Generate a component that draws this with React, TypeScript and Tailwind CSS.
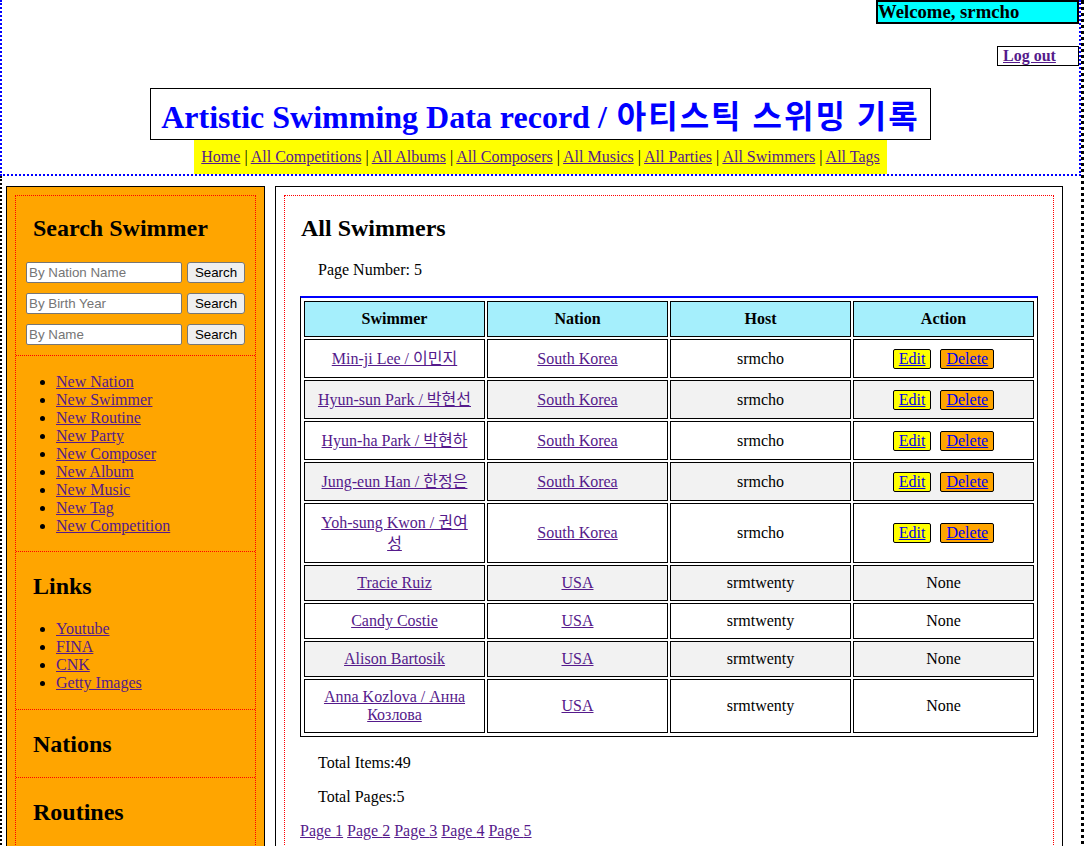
import React from 'react';

type Row = { name: React.ReactNode; key: string; ko?: boolean; nation: string; host: string; edit: boolean };

const rows: Row[] = [
  { key: 'a', name: 'Min-ji Lee / 이민지', ko: true, nation: 'South Korea', host: 'srmcho', edit: true },
  { key: 'b', name: 'Hyun-sun Park / 박현선', ko: true, nation: 'South Korea', host: 'srmcho', edit: true },
  { key: 'c', name: 'Hyun-ha Park / 박현하', ko: true, nation: 'South Korea', host: 'srmcho', edit: true },
  { key: 'd', name: 'Jung-eun Han / 한정은', ko: true, nation: 'South Korea', host: 'srmcho', edit: true },
  {
    key: 'e',
    name: (
      <>
        Yoh-sung Kwon / 권여
        <br />성
      </>
    ),
    ko: true,
    nation: 'South Korea',
    host: 'srmcho',
    edit: true,
  },
  { key: 'f', name: 'Tracie Ruiz', nation: 'USA', host: 'srmtwenty', edit: false },
  { key: 'g', name: 'Candy Costie', nation: 'USA', host: 'srmtwenty', edit: false },
  { key: 'h', name: 'Alison Bartosik', nation: 'USA', host: 'srmtwenty', edit: false },
  { key: 'i', name: 'Anna Kozlova / Анна Козлова', nation: 'USA', host: 'srmtwenty', edit: false },
];

const navItems = ['Home', 'All Competitions', 'All Albums', 'All Composers', 'All Musics', 'All Parties', 'All Swimmers', 'All Tags'];
const newItems = ['New Nation', 'New Swimmer', 'New Routine', 'New Party', 'New Composer', 'New Album', 'New Music', 'New Tag', 'New Competition'];
const linkItems = ['Youtube', 'FINA', 'CNK', 'Getty Images'];

function L({ children }: { children: React.ReactNode }) {
  return <a href="#" className="text-[#551a8b] underline">{children}</a>;
}

export default function App() {
  return (
    <div className="w-full min-h-[846px] bg-white border-r-[3px] border-dotted border-black font-['Liberation_Serif','Noto_Sans_CJK_KR',serif] text-[16px] leading-[18px] text-black">
      <header className="h-[176px] border-x-2 border-b-2 border-dotted border-[#0000ff] flex flex-col items-center">
        <div className="self-end w-[203px] h-[24px] bg-[#00ffff] border-2 border-black text-[18.72px] font-bold leading-[20px]">
          Welcome, srmcho
        </div>
        <div className="self-end mt-[22px] w-[82px] h-[20px] border border-black pl-[5px] leading-[18px]">
          <a href="#" className="font-bold underline text-[#551a8b]">Log out</a>
        </div>
        <div className="mt-[22px] h-[52px] border border-black px-[10px] pt-[6px] flex items-center text-[32px] font-bold text-[#0000ff] leading-[40px] whitespace-nowrap">
          <span>Artistic Swimming Data record /</span>
          <span className="tracking-[2px] ml-[10px]">아티스틱 스위밍 기록</span>
        </div>
        <div className="h-[34px] bg-[#ffff00] px-[7px] py-[8px] leading-[18px] whitespace-nowrap">
          {navItems.map((n, i) => (
            <React.Fragment key={n}>
              {i > 0 && ' | '}
              <L>{n}</L>
            </React.Fragment>
          ))}
        </div>
      </header>

      <div className="border-l-2 border-dotted border-black flex items-start gap-[10px] pl-[4px] pt-[10px]">
        <aside className="w-[259px] shrink-0 bg-[#ffa500] border border-black p-[8px] pb-[40px]">
          <div className="border-x border-t border-dotted border-[#ff0000]">
            <section className="border-b border-dotted border-[#ff0000] px-[10px] pb-[10px]">
              <h2 className="mt-[18px] mb-[20px] pl-[7px] text-[24px] font-bold leading-[28px]">Search Swimmer</h2>
              {['By Nation Name', 'By Birth Year', 'By Name'].map((p, i) => (
                <div key={p} className={i > 0 ? 'flex gap-[5px] mt-[10px]' : 'flex gap-[5px]'}>
                  <input
                    placeholder={p}
                    className="w-[156px] h-[21px] bg-white border border-[#767676] rounded-[2px] px-[2px] font-['Liberation_Sans',Arial,sans-serif] text-[13.33px] placeholder:text-[#757575] outline-none"
                  />
                  <button className="w-[58px] h-[21px] bg-[#efefef] border border-[#767676] rounded-[3px] font-['Liberation_Sans',Arial,sans-serif] text-[13.33px] text-black leading-[15px]">
                    Search
                  </button>
                </div>
              ))}
            </section>
            <section className="border-b border-dotted border-[#ff0000]">
              <ul className="list-disc pl-[40px] mt-[17px] mb-[16px]">
                {newItems.map((n) => (
                  <li key={n} className="leading-[18px]"><L>{n}</L></li>
                ))}
              </ul>
            </section>
            <section className="border-b border-dotted border-[#ff0000]">
              <h2 className="mt-[20px] mb-[20px] pl-[17px] text-[24px] font-bold leading-[28px]">Links</h2>
              <ul className="list-disc pl-[40px] mb-[17px]">
                {linkItems.map((n) => (
                  <li key={n} className="leading-[18px]"><L>{n}</L></li>
                ))}
              </ul>
            </section>
            <section className="border-b border-dotted border-[#ff0000]">
              <h2 className="mt-[20px] mb-[19px] pl-[17px] text-[24px] font-bold leading-[28px]">Nations</h2>
            </section>
            <section className="border-b border-dotted border-[#ff0000]">
              <h2 className="mt-[20px] mb-[20px] pl-[17px] text-[24px] font-bold leading-[28px]">Routines</h2>
            </section>
          </div>
        </aside>

        <main className="w-[788px] shrink-0 border border-black p-[8px]">
          <div className="border border-dotted border-[#ff0000] px-[15px] pb-[20px]">
            <h2 className="mt-[18px] pl-[1px] text-[24px] font-bold leading-[28px]">All Swimmers</h2>
            <p className="mt-[19px] pl-[18px] leading-[18px]">Page Number: 5</p>
            <table className="mt-[17px] w-[738px] table-fixed border-separate border-spacing-[2px] border border-black border-t-2 border-t-[#0000ff] p-px">
              <thead>
                <tr>
                  {['Swimmer', 'Nation', 'Host', 'Action'].map((h) => (
                    <th key={h} className="border border-black bg-[#a5effc] py-[8px] font-bold leading-[18px] text-center">{h}</th>
                  ))}
                </tr>
              </thead>
              <tbody>
                {rows.map((r, i) => (
                  <tr key={r.key} className={i % 2 === 1 ? 'bg-[#f2f2f2]' : 'bg-white'}>
                    <td className={r.ko ? 'border border-black py-[8px] px-[8px] text-center leading-[21px]' : 'border border-black py-[8px] px-[8px] text-center leading-[18px]'}>
                      <L>{r.name}</L>
                    </td>
                    <td className="border border-black py-[8px] px-[8px] text-center leading-[18px]"><L>{r.nation}</L></td>
                    <td className="border border-black py-[8px] px-[8px] text-center leading-[18px]">{r.host}</td>
                    <td className="border border-black py-[8px] px-[8px] text-center leading-[18px]">
                      {r.edit ? (
                        <div className="flex justify-center items-center gap-[9px] h-[21px]">
                          <span className="inline-flex items-center h-[20px] px-[5px] border border-black rounded-[2px] bg-[#ffff00]">
                            <a href="#" className="text-[#0000ee] underline">Edit</a>
                          </span>
                          <span className="inline-flex items-center h-[20px] px-[5px] border border-black rounded-[2px] bg-[#ffa500]">
                            <a href="#" className="text-[#0000ee] underline">Delete</a>
                          </span>
                        </div>
                      ) : (
                        'None'
                      )}
                    </td>
                  </tr>
                ))}
              </tbody>
            </table>
            <p className="mt-[17px] pl-[18px] leading-[18px]">Total Items:49</p>
            <p className="mt-[16px] pl-[18px] leading-[18px]">Total Pages:5</p>
            <p className="mt-[16px] leading-[18px]">
              {[1, 2, 3, 4, 5].map((n, i) => (
                <React.Fragment key={n}>
                  {i > 0 && ' '}
                  <L>Page {n}</L>
                </React.Fragment>
              ))}
            </p>
          </div>
        </main>
      </div>
    </div>
  );
}
